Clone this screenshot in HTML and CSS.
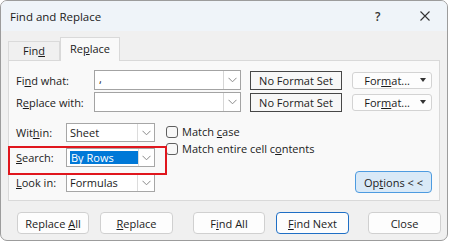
FILE: index.html
```html
<!DOCTYPE html>
<html>
<head>
<meta charset="utf-8">
<link rel="stylesheet" href="styles.css">
</head>
<body>
<div class="window">
  <div class="titlebar">
    <span class="title">Find and Replace</span>
    <span class="help">?</span>
    <span class="close"><svg width="12" height="12" viewBox="0 0 12 12"><path d="M1.5 1.5 L10.5 10.5 M10.5 1.5 L1.5 10.5" stroke="#333" stroke-width="1.1" fill="none"/></svg></span>
  </div>
  <div class="content">
    <div class="tabs">
      <div class="tab"><span>Fin<u>d</u></span></div>
      <div class="tab active"><span>Re<u>p</u>lace</span></div>
    </div>
    <div class="panel">
      <div class="rows">
        <div class="row">
          <span class="lbl">Fi<u>n</u>d what:</span>
          <div class="combo"><span class="val">,</span><span class="arrow"><svg width="9" height="6" viewBox="0 0 9 6"><path d="M0.5 0.8 L4.5 4.8 L8.5 0.8" stroke="#8a8a8a" stroke-width="1" fill="none"/></svg></span></div>
          <div class="nofmt">No Format Set</div>
          <div class="fmtbtn"><span>For<u>m</u>at...</span><span class="tri"></span></div>
        </div>
        <div class="row">
          <span class="lbl">R<u>e</u>place with:</span>
          <div class="combo"><span class="val"></span><span class="arrow"><svg width="9" height="6" viewBox="0 0 9 6"><path d="M0.5 0.8 L4.5 4.8 L8.5 0.8" stroke="#8a8a8a" stroke-width="1" fill="none"/></svg></span></div>
          <div class="nofmt">No Format Set</div>
          <div class="fmtbtn"><span>For<u>m</u>at...</span><span class="tri"></span></div>
        </div>
      </div>
      <div class="options">
        <div class="selects">
          <span class="slbl">Wit<u>h</u>in:</span>
          <div class="select"><span class="sval">Sheet</span><span class="sarrow"><svg width="9" height="6" viewBox="0 0 9 6"><path d="M0.5 0.8 L4.5 4.8 L8.5 0.8" stroke="#8a8a8a" stroke-width="1" fill="none"/></svg></span></div>
          <span class="slbl search"><u>S</u>earch:</span>
          <div class="select"><span class="sval"><span class="hl">By Rows</span></span><span class="sarrow"><svg width="9" height="6" viewBox="0 0 9 6"><path d="M0.5 0.8 L4.5 4.8 L8.5 0.8" stroke="#8a8a8a" stroke-width="1" fill="none"/></svg></span></div>
          <span class="slbl"><u>L</u>ook in:</span>
          <div class="select"><span class="sval">Formulas</span><span class="sarrow"><svg width="9" height="6" viewBox="0 0 9 6"><path d="M0.5 0.8 L4.5 4.8 L8.5 0.8" stroke="#8a8a8a" stroke-width="1" fill="none"/></svg></span></div>
        </div>
        <div class="checks">
          <div class="check"><span class="box"></span><span>Match <u>c</u>ase</span></div>
          <div class="check"><span class="box"></span><span>Match entire cell c<u>o</u>ntents</span></div>
        </div>
        <div class="optwrap">
          <div class="btn optbtn"><span>Op<u>t</u>ions &lt; &lt;</span></div>
        </div>
      </div>
    </div>
    <div class="buttons">
      <div class="btn b1"><span>Replace <u>A</u>ll</span></div>
      <div class="btn b2"><span><u>R</u>eplace</span></div>
      <div class="btn b3"><span>F<u>i</u>nd All</span></div>
      <div class="btn b4"><span><u>F</u>ind Next</span></div>
      <div class="btn b5"><span>Close</span></div>
    </div>
  </div>
</div>
</body>
</html>
```

FILE: styles.css
```css
* { box-sizing: border-box; }
html, body { margin: 0; padding: 0; }
body {
  background: #ffffff;
  font-family: "Open Sans", "Noto Sans", sans-serif;
  font-size: 11px;
  color: #1b1b1b;
  width: 450px;
  height: 242px;
  overflow: hidden;
}
u { text-decoration: underline; text-underline-offset: 1px; text-decoration-thickness: 1px; }
.window {
  width: 448px;
  height: 241px;
  border: 1px solid #9c9c9c;
  border-radius: 7px;
  background: #f0f0f0;
  overflow: hidden;
}
.titlebar {
  height: 30px;
  background: #eff4f9;
  display: flex;
  align-items: center;
  padding-left: 9px;
}
.title { font-size: 11.5px; flex: 1; color: #1a1a1a; }
.help { font-size: 12px; width: 14px; margin-right: 30px; color: #333; font-weight: 600; }
.close { width: 12px; height: 12px; margin-right: 16px; display: flex; }
.content { padding: 6px 0 0 7px; }
.tabs { display: flex; align-items: flex-end; height: 23px; }
.tab {
  width: 52px;
  height: 19px;
  border: 1px solid #dadada;
  border-bottom: none;
  background: #f0f0f0;
  text-align: center;
  line-height: 18px;
}
.tab.active {
  width: 60px;
  background: #f9f9f9;
  border-color: #d9d9d9;
  line-height: 22px;
  position: relative;
  z-index: 1;
  margin-bottom: -1px;
  height: 24px;
}
.panel {
  width: 432px;
  height: 141px;
  border: 1px solid #d9d9d9;
  background: #f9f9f9;
  padding: 9px 7px 7px 7px;
  display: flex;
  flex-direction: column;
}
.rows { display: flex; flex-direction: column; gap: 2px; }
.row { display: flex; align-items: center; height: 20px; }
.lbl { width: 78px; }
.combo {
  width: 147px;
  height: 20px;
  border: 1px solid #a3a3a3;
  background: #fff;
  display: flex;
}
.val { flex: 1; padding-left: 4px; line-height: 16px; }
.arrow {
  width: 17px;
  border-left: 1px solid #d6d6d6;
  display: flex;
  align-items: center;
  justify-content: center;
}
.nofmt {
  width: 92px;
  height: 19px;
  margin-left: 9px;
  border: 1px solid #474747;
  background: #f7f7f7;
  text-align: center;
  line-height: 17px;
}
.fmtbtn {
  width: 80px;
  height: 17px;
  margin-left: 10px;
  border: 1px solid #d3d3d3;
  border-radius: 3px;
  background: #fdfdfd;
  display: flex;
  align-items: center;
  justify-content: flex-end;
  padding-right: 5px;
  gap: 10px;
  line-height: 15px;
}
.tri {
  width: 0; height: 0;
  border-left: 3px solid transparent;
  border-right: 3px solid transparent;
  border-top: 4px solid #333;
}
.options { display: flex; margin-top: 11px; flex: 1; }
.selects {
  display: grid;
  grid-template-columns: 50px 89px;
  grid-auto-rows: 19px;
  row-gap: 6px;
  align-items: center;
}
.slbl { line-height: 19px; }
.slbl.search { position: relative; }
.slbl.search::before {
  content: "";
  position: absolute;
  left: -8px;
  top: -2px;
  width: 155px;
  height: 25px;
  border: 2px solid #e0161d;
  pointer-events: none;
}
.select {
  height: 19px;
  border: 1px solid #a6a6a6;
  background: #fff;
  display: flex;
}
.sval { flex: 1; padding-left: 3px; line-height: 17px; display: flex; align-items: center; }
.hl {
  background: #0078d7;
  color: #fff;
  display: block;
  width: 68px;
  height: 13px;
  line-height: 13px;
  padding-left: 1px;
}
.sarrow {
  width: 17px;
  border-left: 1px solid #dcdcdc;
  display: flex;
  align-items: center;
  justify-content: center;
}
.checks { margin-left: 11px; display: flex; flex-direction: column; }
.check { display: flex; align-items: center; height: 17px; gap: 4px; }
.box {
  width: 12px; height: 12px;
  border: 1px solid #5f5f5f;
  border-radius: 3px;
  background: #f7f7f7;
}
.optwrap { flex: 1; display: flex; justify-content: flex-end; align-items: flex-end; }
.btn {
  height: 22px;
  border: 1px solid #d0d0d0;
  border-radius: 4px;
  background: #fdfdfd;
  display: flex;
  align-items: center;
  justify-content: center;
}
.optbtn {
  width: 77px;
  background: #d9e9f7;
  border: 1px solid #4d9be0;
}
.buttons { display: flex; margin-top: 11px; }
.b1 { width: 72px; margin-left: 9px; }
.b2 { width: 73px; margin-left: 11px; }
.b3 { width: 72px; margin-left: 20px; }
.b4 { width: 73px; margin-left: 11px; border: 1.5px solid #1f6fc5; }
.b5 { width: 73px; margin-left: 19px; }
```
